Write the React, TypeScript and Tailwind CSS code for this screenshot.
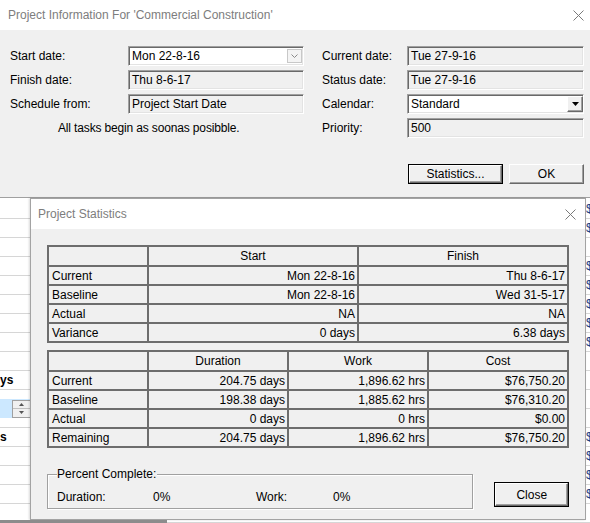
import type { ReactNode } from "react";

const sans = "font-['Liberation_Sans',Arial,sans-serif]";

const startFinish = [
  ["Current", "Mon 22-8-16", "Thu 8-6-17"],
  ["Baseline", "Mon 22-8-16", "Wed 31-5-17"],
  ["Actual", "NA", "NA"],
  ["Variance", "0 days", "6.38 days"],
];

const totals = [
  ["Current", "204.75 days", "1,896.62 hrs", "$76,750.20"],
  ["Baseline", "198.38 days", "1,885.62 hrs", "$76,310.20"],
  ["Actual", "0 days", "0 hrs", "$0.00"],
  ["Remaining", "204.75 days", "1,896.62 hrs", "$76,750.20"],
];

// rows of the project sheet peeking out behind the dialogs
const sheetRows = [
  { left: "", right: "$7" },
  { left: "", right: "$6" },
  { left: "", right: "" },
  { left: "", right: "$9" },
  { left: "", right: "$9" },
  { left: "", right: "$6" },
  { left: "", right: "$2" },
  { left: "", right: "$2" },
  { left: "", right: "" },
  { left: "ys", right: "" },
  { left: "", right: "" },
  { left: "", right: "" },
  { left: "s", right: "$1" },
  { left: "", right: "$0" },
  { left: "", right: "$5" },
  { left: "", right: "$8" },
  { left: "", right: "" },
];

function Sunken({ white, children }: { white?: boolean; children?: ReactNode }) {
  return (
    <div
      className={`flex h-5 items-center border border-t-[#a0a0a0] border-l-[#a0a0a0] border-r-white border-b-white shadow-[inset_1px_1px_0_#696969,inset_-1px_-1px_0_#e3e3e3] ${
        white ? "bg-white" : "bg-[#f0f0f0]"
      }`}
    >
      {children}
    </div>
  );
}

function Raised({ children, def, className = "" }: { children: ReactNode; def?: boolean; className?: string }) {
  const inner = (
    <div className="flex h-full w-full items-center justify-center border border-t-white border-l-white border-r-[#696969] border-b-[#696969] bg-[#f0f0f0] shadow-[inset_-1px_-1px_0_#a0a0a0] text-[12px] text-black">
      {children}
    </div>
  );
  if (def) return <div className={`border border-black ${className}`}>{inner}</div>;
  return <div className={className}>{inner}</div>;
}

function CloseX() {
  return (
    <svg width="11" height="11" viewBox="0 0 11 11" className="block">
      <path d="M0.5 0.5 L10.5 10.5 M10.5 0.5 L0.5 10.5" stroke="#7a7a7a" strokeWidth="1" fill="none" />
    </svg>
  );
}

function FormRow({ label, labelW, children }: { label: string; labelW: string; children: ReactNode }) {
  return (
    <div className="flex h-5 items-center">
      <div className={`${labelW} shrink-0 text-[12px] leading-5 text-black`}>{label}</div>
      <div className="flex-1">{children}</div>
    </div>
  );
}

function FieldText({ children }: { children: ReactNode }) {
  return <span className="pl-[3px] text-[12px] leading-4 text-black">{children}</span>;
}

function ProjectInfo() {
  return (
    <div className="h-[197px] bg-[#f0f0f0]">
      <div className="flex h-[30px] items-center justify-between bg-white pl-2 pr-[6px]">
        <span className="text-[12px] text-[#7d7d7d]">Project Information For 'Commercial Construction'</span>
        <CloseX />
      </div>
      <div className="flex gap-[18px] pl-[10px] pt-4">
        <div className="flex w-[294px] flex-col gap-1">
          <FormRow label="Start date:" labelW="w-[118px]">
            <Sunken white>
              <FieldText>Mon 22-8-16</FieldText>
              <div className="ml-auto mr-[1px] flex h-[14px] w-[15px] items-center justify-center border border-[#c8c8c8] bg-[#f4f4f4]">
                <svg width="7" height="4" viewBox="0 0 7 4">
                  <path d="M0.5 0.5 L3.5 3.5 L6.5 0.5" stroke="#8a8a8a" fill="none" />
                </svg>
              </div>
            </Sunken>
          </FormRow>
          <FormRow label="Finish date:" labelW="w-[118px]">
            <Sunken>
              <FieldText>Thu 8-6-17</FieldText>
            </Sunken>
          </FormRow>
          <FormRow label="Schedule from:" labelW="w-[118px]">
            <Sunken>
              <FieldText>Project Start Date</FieldText>
            </Sunken>
          </FormRow>
          <div className="h-5 pl-12 text-[12px] leading-5 tracking-[-0.15px] text-black">
            All tasks begin as soonas posibble.
          </div>
        </div>
        <div className="flex w-[262px] flex-col gap-1">
          <FormRow label="Current date:" labelW="w-[85px]">
            <Sunken>
              <FieldText>Tue 27-9-16</FieldText>
            </Sunken>
          </FormRow>
          <FormRow label="Status date:" labelW="w-[85px]">
            <Sunken>
              <FieldText>Tue 27-9-16</FieldText>
            </Sunken>
          </FormRow>
          <FormRow label="Calendar:" labelW="w-[85px]">
            <Sunken white>
              <FieldText>Standard</FieldText>
              <Raised className="ml-auto h-4 w-4">
                <svg width="7" height="4" viewBox="0 0 7 4">
                  <path d="M0 0 H7 L3.5 4 Z" fill="#000" />
                </svg>
              </Raised>
            </Sunken>
          </FormRow>
          <FormRow label="Priority:" labelW="w-[85px]">
            <Sunken>
              <FieldText>500</FieldText>
            </Sunken>
          </FormRow>
        </div>
      </div>
      <div className="mt-[26px] flex justify-end gap-[6px] pr-[6px]">
        <Raised def className="h-5 w-[95px]">Statistics...</Raised>
        <Raised className="h-5 w-[75px]">OK</Raised>
      </div>
    </div>
  );
}

function Cell({ children, align }: { children?: ReactNode; align: "left" | "right" | "center" }) {
  const a = align === "left" ? "justify-start pl-[3px]" : align === "right" ? "justify-end pr-[2px]" : "justify-center";
  return <div className={`flex items-center bg-[#f0f0f0] text-[12px] text-black ${a}`}>{children}</div>;
}

function StatsDialog() {
  return (
    <div className="absolute left-[30px] top-[198px] h-[322px] w-[556px] border border-[#a3a3a3] bg-[#f0f0f0] shadow-[-1px_0_2px_rgba(0,0,0,0.15)]">
      <div className="flex h-[30px] items-center justify-between bg-white pl-[7px] pr-[9px]">
        <span className="text-[12px] text-[#7d7d7d]">Project Statistics</span>
        <CloseX />
      </div>
      <div className="px-4 pt-4">
        <div className="grid w-[522px] grid-cols-[98px_208px_208px] grid-rows-[18px_17px_17px_17px_17px] gap-[2px] border-2 border-[#6d6d6d] bg-[#6d6d6d]">
          <Cell align="center" />
          <Cell align="center">Start</Cell>
          <Cell align="center">Finish</Cell>
          {startFinish.map((r) =>
            r.map((v, i) => (
              <Cell key={r[0] + i} align={i === 0 ? "left" : "right"}>
                {v}
              </Cell>
            ))
          )}
        </div>
        <div className="mt-[7px] grid w-[522px] grid-cols-[98px_138px_138px_138px] grid-rows-[18px_17px_17px_17px_17px] gap-[2px] border-2 border-[#6d6d6d] bg-[#6d6d6d]">
          <Cell align="center" />
          <Cell align="center">Duration</Cell>
          <Cell align="center">Work</Cell>
          <Cell align="center">Cost</Cell>
          {totals.map((r) =>
            r.map((v, i) => (
              <Cell key={r[0] + i} align={i === 0 ? "left" : "right"}>
                {v}
              </Cell>
            ))
          )}
        </div>
        <div className="mt-[26px] flex items-start">
          <div className="relative h-[35px] w-[429px] border border-[#a0a0a0] shadow-[inset_1px_1px_0_#fff,1px_1px_0_#fff]">
            <span className="absolute -top-[8px] left-[9px] bg-[#f0f0f0] pr-[1px] text-[12px] leading-[14px] text-black">
              Percent Complete:
            </span>
            <div className="flex pl-[9px] pt-[15px] text-[12px] leading-[14px] text-black">
              <span className="w-[96px]">Duration:</span>
              <span className="w-[103px]">0%</span>
              <span className="w-[77px]">Work:</span>
              <span>0%</span>
            </div>
          </div>
          <Raised def className="ml-[21px] mt-2 h-[25px] w-[75px]">Close</Raised>
        </div>
      </div>
    </div>
  );
}

function Sheet() {
  return (
    <div className="relative h-[326px] bg-white">
      <div className="h-[3px] border-t border-[#a0a0a0]" />
      {sheetRows.map((r, i) => (
        <div key={i} className="flex h-[19px] items-center justify-between border-b border-[#d6d6d6]">
          <span className="w-[30px] text-[12px] font-bold text-black">{r.left}</span>
          <div className="w-[4px] overflow-hidden whitespace-nowrap text-[12px] text-[#1f3f7f]">{r.right}</div>
        </div>
      ))}
      {/* selected cell with its spinner, sitting across the row lines */}
      <div className="absolute left-0 top-[202px] flex h-[19px] w-[31px] items-center justify-end bg-[#cce8ff]">
        <div className="flex h-[18px] w-[19px] flex-col border border-[#a0a0a0] bg-[#f0f0f0]">
          <div className="flex flex-1 items-center justify-center border-b border-[#c0c0c0]">
            <svg width="5" height="3" viewBox="0 0 5 3">
              <path d="M0 3 H5 L2.5 0 Z" fill="#555" />
            </svg>
          </div>
          <div className="flex flex-1 items-center justify-center">
            <svg width="5" height="3" viewBox="0 0 5 3">
              <path d="M0 0 H5 L2.5 3 Z" fill="#555" />
            </svg>
          </div>
        </div>
      </div>
    </div>
  );
}

export default function App() {
  return (
    <div className={`relative h-[523px] w-[590px] overflow-hidden bg-[#f0f0f0] ${sans}`}>
      <ProjectInfo />
      <Sheet />
      <StatsDialog />
      <div className="absolute bottom-0 left-0 h-[3px] w-[167px] bg-[#8c8c8c]" />
    </div>
  );
}
